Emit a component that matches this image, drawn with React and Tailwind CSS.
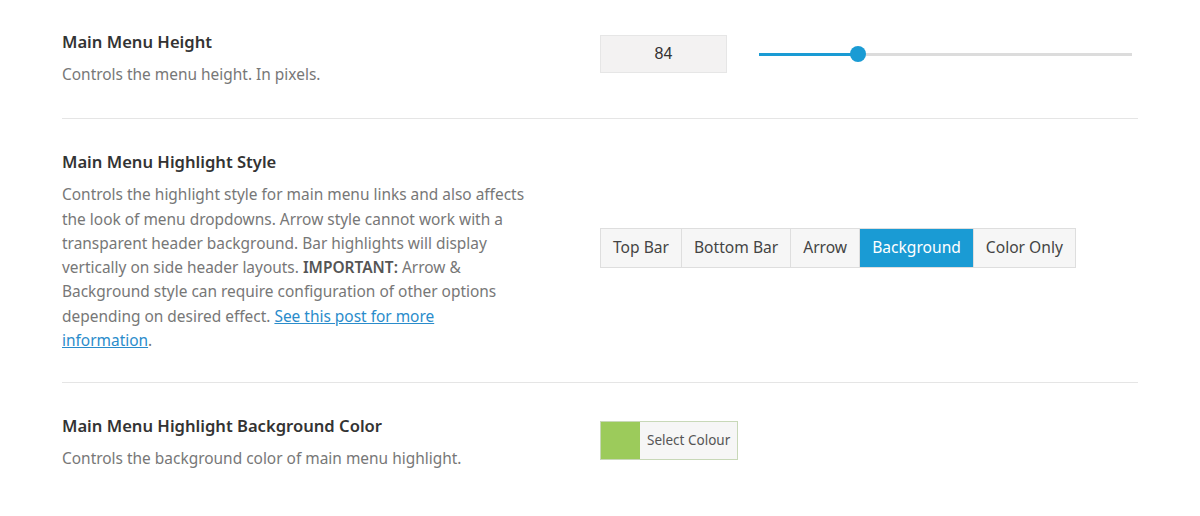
import { useState } from "react";

const font = { fontFamily: '"Segoe UI", "Noto Sans", sans-serif' };

function Row({ title, children, control, controlClass = "" }) {
  return (
    <div className="flex items-center">
      <div className="w-[538px] shrink-0">
        <h3 className="text-[16.6px] font-semibold leading-6 text-[#333]">{title}</h3>
        <div className="mt-2 w-[463px] text-[15.45px] leading-[24.3px] text-[#777]">{children}</div>
      </div>
      <div className={`flex-1 ${controlClass}`}>{control}</div>
    </div>
  );
}

function HeightControl() {
  const [value] = useState(84);
  const pct = 26.5;
  return (
    <div className="flex items-center">
      <div
        className="flex h-[38px] w-[127px] items-center justify-center border border-[#e6e6e6] bg-[#f3f2f2] text-[16px] text-[#333]"
        style={{ fontFamily: '"Liberation Sans", Arial, sans-serif' }}
      >
        {value}
      </div>
      <div className="relative ml-8 mr-[6px] h-[3px] flex-1 bg-[#dcdcdc]">
        <div className="absolute inset-y-0 left-0 bg-[#1a9bd4]" style={{ width: `${pct}%` }} />
        <div
          className="absolute top-1/2 h-4 w-4 -translate-x-1/2 -translate-y-1/2 rounded-full bg-[#1a9bd4]"
          style={{ left: `${pct}%` }}
        />
      </div>
    </div>
  );
}

function HighlightStyle() {
  const [active, setActive] = useState("Background");
  const opts = ["Top Bar", "Bottom Bar", "Arrow", "Background", "Color Only"];
  return (
    <div className="inline-flex border border-[#dedede]">
      {opts.map((o, i) => (
        <button
          key={o}
          onClick={() => setActive(o)}
          className={`h-[38px] px-[12px] text-[15.6px] ${i > 0 ? "border-l border-[#dedede]" : ""} ${
            active === o ? "bg-[#1a9bd4] text-white" : "bg-[#f6f6f6] text-[#444]"
          }`}
        >
          {o}
        </button>
      ))}
    </div>
  );
}

function ColourPicker() {
  return (
    <div className="inline-flex h-[39px] border border-[#c8d8b8]">
      <div className="w-[39px] bg-[#9ccb5b]" />
      <div className="flex items-center bg-[#f6f6f6] px-[7px] text-[13.5px] text-[#555]">Select Colour</div>
    </div>
  );
}

export default function App() {
  return (
    <div className="h-[516px] w-[1200px] bg-white px-[62px]" style={font}>
      <div className="w-[1076px]">
        <div className="pb-[32px] pt-[30px]">
          <Row title="Main Menu Height" control={<HeightControl />} controlClass="-mt-2">
            Controls the menu height. In pixels.
          </Row>
        </div>
        <div className="border-t border-[#e5e5e5] pb-[30px] pt-[31px]">
          <Row title="Main Menu Highlight Style" control={<HighlightStyle />} controlClass="-mt-[7px]">
            Controls the highlight style for main menu links and also affects the look of menu dropdowns. Arrow
            style cannot work with a transparent header background. Bar highlights will display vertically on side
            header layouts. <strong className="font-semibold text-[#555]">IMPORTANT:</strong> Arrow &amp; Background
            style can require configuration of other options depending on desired effect.{" "}
            <a href="#" className="text-[#2a8ccb] underline">
              See this post for more information
            </a>
            .
          </Row>
        </div>
        <div className="border-t border-[#e5e5e5] pt-[31px]">
          <Row title="Main Menu Highlight Background Color" control={<ColourPicker />}>
            Controls the background color of main menu highlight.
          </Row>
        </div>
      </div>
    </div>
  );
}
